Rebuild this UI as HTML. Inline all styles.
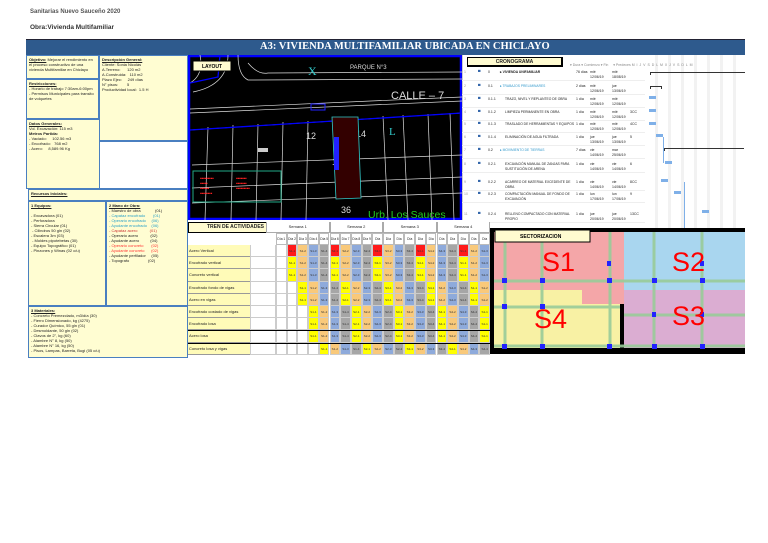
<!DOCTYPE html>
<html><head><meta charset="utf-8">
<style>
*{margin:0;padding:0;box-sizing:border-box}
body{width:768px;height:543px;background:#fff;position:relative;overflow:hidden;font-family:"Liberation Sans",sans-serif;color:#222}
.a{position:absolute}
.box{position:absolute;background:#fffdd2;border:1px solid #4a7fc0;font-size:4px;line-height:5px;padding:1px 2px;overflow:hidden}
.box b{text-decoration:underline}
.t{font-size:4px;line-height:4.6px;white-space:nowrap}
#tren td{border:1px solid #bbb;height:12px;padding:0}
</style></head><body>
<div class="a" style="left:30px;top:9px;font-size:6px;font-weight:bold;color:#555">Sanitarias Nuevo Sauceño 2020</div>
<div class="a" style="left:30px;top:24px;font-size:6.5px;font-weight:bold;color:#333">Obra:Vivienda Multifamiliar</div>

<div class="a" style="left:26px;top:39px;width:719px;height:16px;background:#2e5a8d;border-top:1px solid #223"></div>
<div class="a" style="left:260px;top:41px;font-family:'Liberation Serif',serif;font-weight:bold;font-size:10.5px;color:#fff">A3: VIVIENDA MULTIFAMILIAR UBICADA EN CHICLAYO</div>

<!-- left panel -->
<div class="box" style="left:26px;top:55px;width:73px;height:24px"><b>Objetivo:</b> Mejorar el rendimiento en el proceso constructivo de una vivienda Multifamiliar en Chiclayo</div>
<div class="box" style="left:26px;top:79px;width:73px;height:40px"><b>Restricciones:</b><br>- Horario de trabajo 7:30am-6:00pm<br>- Permisos Municipales para transito de volquetes</div>
<div class="box" style="left:99px;top:55px;width:89px;height:86px"><b>Descripción General:</b><br>Cliente: Sonia Nicolás<br>A.Terreno: &nbsp; &nbsp; &nbsp;120 m2<br>A.Construida: &nbsp; 110 m2<br>Plazo Ejec: &nbsp; &nbsp; 249 días<br>N° pisos: &nbsp; &nbsp; &nbsp; &nbsp;5<br>Productividad local: &nbsp;1.5 H</div>
<div class="box" style="left:99px;top:141px;width:89px;height:48px;background:#fff"></div>
<div class="box" style="left:26px;top:119px;width:74px;height:70px"><b>Datos Generales:</b><br>Vol. Excavación: 115 m3<br><b style="text-decoration:none">Metros Partida:</b><br>- Vaciado: &nbsp; &nbsp; 102.56 m3<br>- Encofrado: &nbsp; 768 m2<br>- Acero: &nbsp; &nbsp; 8,589.96 Kg</div>
<div class="box" style="left:28px;top:189px;width:160px;height:12px"><b>Recursos Iniciales:</b></div>
<div class="box" style="left:28px;top:201px;width:78px;height:105px"><b>1 Equipos:</b><br><br>- Excavadora (01)<br>- Perforadora<br>- Sierra Circular (01)<br>&nbsp;- Cilindros 50 gln (02)<br>- Escalera 3m (03)<br>&nbsp;- Moldes pipotebetas (30)<br>- Equipo Topográfico (01)<br>- Pinzones y Winas (02 c/u)</div>
<div class="box" style="left:106px;top:201px;width:82px;height:105px"><b>2 Mano de Obra:</b><br>- Maestro de obra &nbsp; &nbsp; &nbsp; &nbsp; &nbsp; &nbsp; (01)<br><span style="color:#2aa0c8">- Capataz encofrado &nbsp; &nbsp; &nbsp; (01)<br>- Operario encofrado &nbsp; &nbsp; (06)<br>- Ayudante encofrado &nbsp; &nbsp;(06)</span><br><span style="color:#c33">- Capataz acero &nbsp; &nbsp; &nbsp; &nbsp; &nbsp; (01)</span><br>- Operario acero &nbsp; &nbsp; &nbsp; &nbsp; &nbsp; (02)<br>- Ayudante acero &nbsp; &nbsp; &nbsp; &nbsp; &nbsp;(04)<br><span style="color:#f33">- Operario concreto &nbsp; &nbsp; &nbsp; (02)<br>- Ayudante concreto &nbsp; &nbsp; &nbsp;(02)</span><br>- Ayudante perfilador &nbsp; &nbsp; (05)<br>- Topografo &nbsp; &nbsp; &nbsp; &nbsp; &nbsp; &nbsp; &nbsp; &nbsp; (02)</div>
<div class="box" style="left:28px;top:306px;width:160px;height:52px"><b>3 Materiales:</b><br>- Concreto Premezclado, m3/día (30)<br>- Fierro Dimensionado, kg (4275)<br>- Curador Químico, 55 gln (01)<br>- Desmoldante, 50 gln (02)<br>- Clavos de 2", kg (60)<br>- Alambre N° 8, kg (50)<br>- Alambre N° 16, kg (50)<br>- Pisos, Lampas, Barreta, Bugi (05 c/u)</div>

<!-- CAD layout -->
<svg class="a" style="left:188px;top:55px" width="274" height="165" viewBox="0 0 274 165">
<rect x="0" y="0" width="274" height="165" fill="#000"/>
<rect x="1" y="1" width="272" height="163" fill="none" stroke="#0000ff" stroke-width="2.5"/>
<g stroke="#ddd" stroke-width="0.7" fill="none">
<path d="M12 0 Q16 20 2 28"/><path d="M40 0 Q40 30 5 37"/>
<path d="M50 0 Q50 20 60 25 L274 24"/><path d="M60 8 Q70 20 80 18 L274 17"/>
<path d="M2 54 L274 42"/><path d="M2 58 L274 46"/><path d="M2 75 L274 58"/>
<path d="M4 133 L274 122"/><path d="M4 148 L274 138"/><path d="M4 110 L274 100"/>
<path d="M20 72 L17 165"/><path d="M45 70 L43 165"/><path d="M70 69 L68 165"/><path d="M95 67 L93 165"/><path d="M120 66 L118 165"/>
<path d="M195 61 L200 165"/><path d="M215 60 L220 165"/><path d="M240 59 L244 165"/><path d="M262 58 L266 165"/>
</g>
<path d="M2 75 L274 58" stroke="#00f" stroke-width="1.3"/>
<path d="M2 28 L30 22 L32 0" stroke="#00f" stroke-width="1.3" fill="none"/>
<rect x="5" y="6" width="38" height="10" fill="#fffbd0" stroke="#000"/>
<text x="14" y="13" font-size="5" font-weight="bold" font-family="Liberation Sans">LAYOUT</text>
<text x="120" y="20" font-size="12" fill="#3cc" font-family="Liberation Serif">X</text>
<text x="162" y="14" font-size="6" fill="#ddd" font-family="Liberation Sans">PARQUE  N°3</text>
<text x="203" y="44" font-size="11" fill="#ddd" font-family="Liberation Sans">CALLE  –  7</text>
<text x="201" y="80" font-size="11" fill="#3cc" font-family="Liberation Serif">L</text>
<text x="118" y="84" font-size="9" fill="#ddd" font-family="Liberation Sans">12</text>
<text x="168" y="82" font-size="9" fill="#ddd" font-family="Liberation Sans">14</text>
<text x="144" y="110" font-size="9" fill="#ddd" font-family="Liberation Sans">13</text>
<text x="153" y="158" font-size="9" fill="#ddd" font-family="Liberation Sans">36</text>
<text x="180" y="163" font-size="10.5" fill="#2c2" font-family="Liberation Sans">Urb. Los Sauces</text>
<polygon points="144,62 170,62 173,143 148,144" fill="#300" stroke="#3cc" stroke-width="0.8"/>
<rect x="146" y="82" width="5" height="33" fill="#22f"/>
<rect x="123" y="49" width="14" height="6" fill="none" stroke="#22f"/>
<rect x="5" y="116" width="88" height="31" fill="none" stroke="#2a8"/>
<g font-size="2.5" fill="#f22"><text x="12" y="124">■■■■■■■■■</text><text x="12" y="129">■■■■■</text><text x="12" y="134">■■■■■■</text><text x="12" y="139">■■■■■■■■</text><text x="48" y="124">■■■■■■■</text><text x="48" y="129">■■■■■■■</text><text x="48" y="134">■■■■■■■■■</text></g>
<rect x="70" y="93" width="10" height="4" fill="#ccc"/>
</svg>

<!-- Cronograma -->
<div class="a" style="left:462px;top:55px;width:283px;height:178px;background:#fff;border-left:1px solid #ccc"></div>
<div class="a" style="left:645px;top:55px;width:100px;height:178px;background:repeating-linear-gradient(90deg,#fff 0 10px,#f2f2f2 10px 13px)"></div>
<div class="a" style="left:467px;top:57px;width:96px;height:10px;background:#fffbd0;border:1px solid #000;border-right-width:2px;border-bottom-width:2px;font-size:5px;font-weight:bold;text-align:center;line-height:8px">CRONOGRAMA</div>
<div class="a t" style="left:570px;top:63px;color:#888;font-size:3.5px">▾ Dura ▾ Comienzo ▾ Fin &nbsp; &nbsp; ▾ Predeces M &nbsp;I &nbsp;J &nbsp;V &nbsp;S &nbsp;D &nbsp;L &nbsp;M &nbsp;X &nbsp;J &nbsp;V &nbsp;S &nbsp;D &nbsp;L &nbsp;M</div>
<div id="gantt"></div>

<!-- Tren de actividades -->
<div class="a" style="left:188px;top:220px;width:302px;height:138px;background:#fff"></div>
<div class="a" style="left:188px;top:222px;width:95px;height:11px;background:#fffbd0;border:1px solid #000;font-size:5px;font-weight:bold;text-align:center;line-height:9px">TREN DE ACTIVIDADES</div>
<div id="tren"></div>

<!-- Sectorizacion -->
<svg class="a" style="left:490px;top:228px" width="255" height="126" viewBox="0 0 255 126">
<rect width="255" height="126" fill="#000"/>
<rect x="4" y="4" width="130" height="72" fill="#f4a6a8"/>
<rect x="134" y="4" width="121" height="58" fill="#a9d6ef"/>
<rect x="134" y="62" width="121" height="58" fill="#dbadd2"/>
<rect x="4" y="62" width="88" height="58" fill="#f8f1a4"/>
<rect x="4" y="76" width="126" height="44" fill="#f8f1a4"/>
<g stroke="#9c9" stroke-width="3" opacity="0.9">
<line x1="4" y1="53" x2="255" y2="53"/><line x1="4" y1="79" x2="130" y2="79"/><line x1="4" y1="118" x2="255" y2="118"/><line x1="134" y1="87" x2="255" y2="87"/>
<line x1="15" y1="4" x2="15" y2="120"/><line x1="52" y1="4" x2="52" y2="120"/><line x1="120" y1="4" x2="120" y2="120"/><line x1="164" y1="4" x2="164" y2="120"/><line x1="212" y1="4" x2="212" y2="120"/>
</g>
<g fill="#22f"><rect x="12" y="50" width="5" height="5"/><rect x="50" y="50" width="5" height="5"/><rect x="117" y="50" width="5" height="5"/><rect x="162" y="50" width="5" height="5"/><rect x="210" y="50" width="5" height="5"/><rect x="12" y="76" width="5" height="5"/><rect x="50" y="76" width="5" height="5"/><rect x="12" y="116" width="5" height="5"/><rect x="50" y="116" width="5" height="5"/><rect x="117" y="116" width="5" height="5"/><rect x="162" y="116" width="5" height="5"/><rect x="210" y="116" width="5" height="5"/><rect x="162" y="84" width="4" height="5"/><rect x="210" y="84" width="4" height="5"/><rect x="117" y="33" width="4" height="5"/><rect x="210" y="33" width="4" height="5"/></g>
<rect x="5" y="2" width="95" height="12" fill="#fffbd0" stroke="#000"/>
<text x="30" y="10" font-size="5" font-weight="bold" font-family="Liberation Sans">SECTORIZACION</text>
<g font-family="Liberation Sans" font-size="27" fill="#f00"><text x="52" y="43">S1</text><text x="182" y="43">S2</text><text x="182" y="97">S3</text><text x="44" y="100">S4</text></g>
</svg>

<script>
// Gantt
(function(){
var rows=[[70,"0","▸ VIVIENDA UNIFAMILIAR","76 días","mié 12/06/19","mié 18/08/19",""],
[84,"0.1","▸ TRABAJOS PRELIMINARES","2 días","mié 12/06/19","jue 13/06/19",""],
[97,"0.1.1","TRAZO, NIVEL Y REPLANTEO DE OBRA","1 día","mié 12/06/19","mié 12/06/19",""],
[110,"0.1.2","LIMPIEZA PERMANENTE EN OBRA","1 día","mié 12/06/19","mié 12/06/19","3CC"],
[122,"0.1.3","TRASLADO DE HERRAMIENTAS Y EQUIPOS","1 día","mié 12/06/19","mié 12/06/19","4CC"],
[135,"0.1.4","ELIMINACIÓN DE AGUA FILTRADA","1 día","jue 13/06/19","jue 13/06/19","5"],
[148,"0.2","▸ MOVIMIENTO DE TIERRAS","7 días","vie 14/06/19","mar 25/06/19",""],
[162,"0.2.1","EXCAVACIÓN MANUAL DE ZANJAS PARA SUSTITUCIÓN DE ARENA","1 día","vie 14/06/19","vie 14/06/19","6"],
[180,"0.2.2","ACARREO DE MATERIAL EXCEDENTE DE OBRA","1 día","vie 14/06/19","vie 14/06/19","8CC"],
[192,"0.2.3","COMPACTACIÓN MANUAL DE FONDO DE EXCAVACIÓN","1 día","lun 17/06/19","lun 17/06/19","9"],
[212,"0.2.4","RELLENO COMPACTADO CON MATERIAL PROPIO","1 día","jue 20/06/19","jue 20/06/19","13CC"]];
var h="";
rows.forEach(function(r,i){
 var y=r[0]; var blue=(r[2].charAt(0)=="▸"&&i>0);
 h+='<div class="a t" style="left:464px;top:'+y+'px;color:#999;font-size:3.5px">'+(i+1)+'</div>';
 h+='<div class="a t" style="left:478px;top:'+y+'px;color:#36a;font-size:3.5px">▀</div>';
 h+='<div class="a t" style="left:488px;top:'+y+'px;font-size:3.5px">'+r[1]+'</div>';
 h+='<div class="a t" style="left:'+(r[2].charAt(0)=="▸"?500:505)+'px;top:'+y+'px;width:70px;white-space:normal;font-size:3.3px;'+(blue?'color:#39c;':'')+(i==0?'font-weight:bold':'')+'">'+r[2]+'</div>';
 h+='<div class="a t" style="left:576px;top:'+y+'px;font-size:3.5px">'+r[3]+'</div>';
 h+='<div class="a t" style="left:590px;top:'+y+'px;width:18px;white-space:normal;font-size:3.5px">'+r[4]+'</div>';
 h+='<div class="a t" style="left:612px;top:'+y+'px;width:18px;white-space:normal;font-size:3.5px">'+r[5]+'</div>';
 h+='<div class="a t" style="left:630px;top:'+y+'px;font-size:3.5px">'+r[6]+'</div>';
 h+='<div class="a" style="left:462px;top:'+(y+9.5)+'px;width:183px;height:1px;background:#eee"></div>';
});
var bars=[[649,96],[649,109],[649,122],[656,134],[665,161],[661,179],[674,191],[702,210]];
bars.forEach(function(b){h+='<div class="a" style="left:'+b[0]+'px;top:'+b[1]+'px;width:7px;height:3px;background:#7fb0e8"></div>';});
h+='<div class="a" style="left:650px;top:72px;width:95px;height:3px;border-top:1px solid #333;border-left:1px solid #333"></div>';
h+='<div class="a" style="left:650px;top:86px;width:12px;height:3px;border-top:1px solid #333;border-left:1px solid #333;border-right:1px solid #333"></div>';
h+='<div class="a" style="left:664px;top:148px;width:80px;height:3px;border-top:1px solid #333;border-left:1px solid #333"></div>';
h+='<div class="a" style="left:663px;top:137px;width:1px;height:26px;background:#7fb0e8"></div>';
h+='<div class="a" style="left:684px;top:182px;width:1px;height:46px;background:#7fb0e8"></div>';
document.getElementById("gantt").innerHTML=h;

// Tren
var t="";
var names=["Acero Vertical","Encofrado vertical","Concreto vertical","Encofrado fondo de vigas","Acero en vigas","Encofrado costado de vigas","Encofrado losa","Acero losa","Concreto losa y vigas"];
var starts=[1,1,1,2,2,3,3,3,4];
var cols=["#ffff00","#f9c97a","#8eaadb","#a6a6a6"];
var x0=276,cw=10.7,y0=245,rh=12.2;
var sem=["Semana 1","Semana 2","Semana 3","Semana 4"];
for(var s=0;s<4;s++){t+='<div class="a" style="left:'+(x0+s*5*cw+ (s==0?-10:0))+'px;top:222px;width:'+(5*cw+(s==0?10:0))+'px;height:11px;border:1px solid #aaa;border-top:none;font-size:4px;text-align:center;line-height:10px;background:#fff">'+sem[s]+'</div>';}
for(var d=0;d<20;d++){t+='<div class="a" style="left:'+(x0+d*cw)+'px;top:233px;width:'+cw+'px;height:12px;border:1px solid #bbb;font-size:3.3px;text-align:center;line-height:11px;background:#fff">Día '+(d+1)+'</div>';}
for(var r=0;r<9;r++){
 var y=y0+r*rh;
 t+='<div class="a" style="left:188px;top:'+y+'px;width:62px;height:'+rh+'px;background:#fffbb8;border-bottom:1px solid #999;font-size:4px;line-height:'+rh+'px;padding-left:1px">'+names[r]+'</div>';
 t+='<div class="a" style="left:250px;top:'+y+'px;width:26px;height:'+rh+'px;background:#fff;border:1px solid #ccc;border-top:none"></div>';
 for(var d=0;d<20;d++){
  var c="#fff",lab="";
  if(d>=starts[r]){var k=(d-starts[r])%4;c=cols[k];if(r==0&&k==0)c="#ff1a1a";var sec=Math.floor((d-starts[r])/4)%4+1;lab="S"+sec+"-"+(k+1);}
  t+='<div class="a" style="left:'+(x0+d*cw)+'px;top:'+y+'px;width:'+cw+'px;height:'+rh+'px;background:'+c+';border:1px solid #ccc;border-top:none;font-size:3px;text-align:center;line-height:'+rh+'px;color:#333">'+lab+'</div>';
 }
}
t+='<div class="a" style="left:188px;top:'+(y0+7*rh)+'px;width:302px;height:1px;background:#000"></div>';
t+='<div class="a" style="left:188px;top:'+(y0+8*rh)+'px;width:302px;height:1px;background:#000"></div>';
document.getElementById("tren").innerHTML=t;
})();
</script>
</body></html>
